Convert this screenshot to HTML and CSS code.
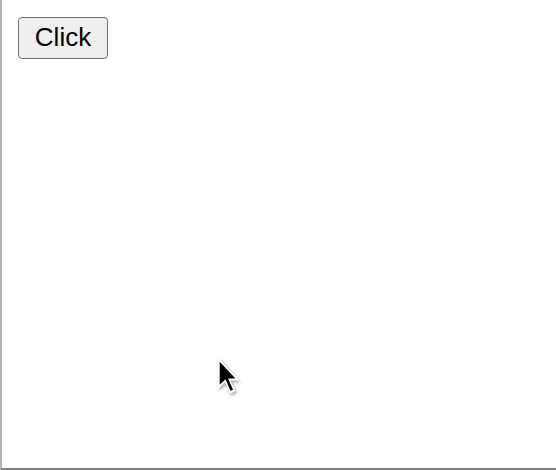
FILE: index.html
```html
<!DOCTYPE html>
<html>
<head>
<meta charset="utf-8">
<link rel="stylesheet" href="styles.css">
</head>
<body>
<div class="frame">
  <button class="btn">Click</button>
  <svg class="cursor" width="32" height="46" viewBox="0 0 26 38">
    <defs>
      <filter id="sh" x="-50%" y="-50%" width="200%" height="200%">
        <feGaussianBlur stdDeviation="1.2"/>
      </filter>
    </defs>
    <path d="M3 2 L3 28 L9 22.5 L13 32 L17.5 30 L13.5 21 L21 21 Z" fill="#000" opacity="0.35" filter="url(#sh)" transform="translate(1,1.5)"/>
    <path d="M3 2 L3 28 L9 22.5 L13 32 L17.5 30 L13.5 21 L21 21 Z" fill="#fff"/>
    <path d="M4.5 5.5 L4.5 24.5 L9.3 20 L13.4 29.6 L15.5 28.7 L11.4 19.4 L17.5 19.4 Z" fill="#000"/>
  </svg>
</div>
</body>
</html>
```
FILE: styles.css
```css
html, body {
  margin: 0;
  padding: 0;
  background: #fff;
}
.frame {
  position: relative;
  box-sizing: border-box;
  width: 556px;
  height: 470px;
  border-left: 2px solid #b4b4b4;
  border-bottom: 2px solid #808080;
  padding: 17px 0 0 16px;
}
.btn {
  display: block;
  width: 90px;
  height: 42px;
  padding: 0 0 2px 0;
  font-family: "Liberation Sans", Arial, sans-serif;
  font-size: 26px;
  color: #000;
  background: #efefef;
  border: 1px solid #6e6e6e;
  border-radius: 4px;
}
.cursor {
  position: absolute;
  left: 212px;
  top: 355px;
}
```
